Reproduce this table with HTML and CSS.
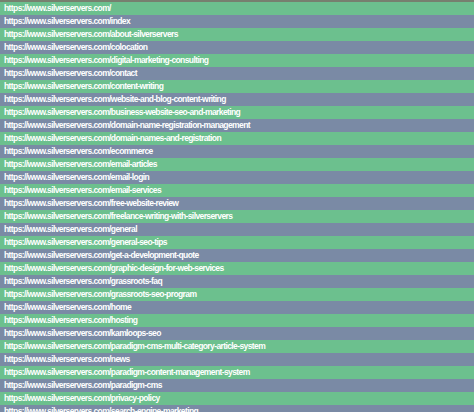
FILE: index.html
```html
<!DOCTYPE html>
<html>
<head>
<meta charset="utf-8">
<link rel="stylesheet" href="styles.css">
</head>
<body>
<div class="list">
<div class="row g">https://www.silverservers.com/</div>
<div class="row b">https://www.silverservers.com/index</div>
<div class="row g">https://www.silverservers.com/about-silverservers</div>
<div class="row b">https://www.silverservers.com/colocation</div>
<div class="row g">https://www.silverservers.com/digital-marketing-consulting</div>
<div class="row b">https://www.silverservers.com/contact</div>
<div class="row g">https://www.silverservers.com/content-writing</div>
<div class="row b">https://www.silverservers.com/website-and-blog-content-writing</div>
<div class="row g">https://www.silverservers.com/business-website-seo-and-marketing</div>
<div class="row b">https://www.silverservers.com/domain-name-registration-management</div>
<div class="row g">https://www.silverservers.com/domain-names-and-registration</div>
<div class="row b">https://www.silverservers.com/ecommerce</div>
<div class="row g">https://www.silverservers.com/email-articles</div>
<div class="row b">https://www.silverservers.com/email-login</div>
<div class="row g">https://www.silverservers.com/email-services</div>
<div class="row b">https://www.silverservers.com/free-website-review</div>
<div class="row g">https://www.silverservers.com/freelance-writing-with-silverservers</div>
<div class="row b">https://www.silverservers.com/general</div>
<div class="row g">https://www.silverservers.com/general-seo-tips</div>
<div class="row b">https://www.silverservers.com/get-a-development-quote</div>
<div class="row g">https://www.silverservers.com/graphic-design-for-web-services</div>
<div class="row b">https://www.silverservers.com/grassroots-faq</div>
<div class="row g">https://www.silverservers.com/grassroots-seo-program</div>
<div class="row b">https://www.silverservers.com/home</div>
<div class="row g">https://www.silverservers.com/hosting</div>
<div class="row b">https://www.silverservers.com/kamloops-seo</div>
<div class="row g">https://www.silverservers.com/paradigm-cms-multi-category-article-system</div>
<div class="row b">https://www.silverservers.com/news</div>
<div class="row g">https://www.silverservers.com/paradigm-content-management-system</div>
<div class="row b">https://www.silverservers.com/paradigm-cms</div>
<div class="row g">https://www.silverservers.com/privacy-policy</div>
<div class="row b">https://www.silverservers.com/search-engine-marketing</div>
</div>
</body>
</html>
```
FILE: styles.css
```css
html, body {
  margin: 0;
  padding: 0;
  background: #7a8aa5;
}
body {
  border-top: 2px solid #77806f;
  font-family: "Liberation Sans", Arial, sans-serif;
  font-weight: bold;
  font-size: 8.5px;
  letter-spacing: -0.6px;
  color: #ffffff;
  overflow: hidden;
}
.list {
  display: flex;
  flex-direction: column;
}
.row {
  height: 13px;
  line-height: 13px;
  padding-left: 4px;
  white-space: nowrap;
}
.g {
  background: #6cc08e;
}
.b {
  background: #7a8aa5;
}
```
